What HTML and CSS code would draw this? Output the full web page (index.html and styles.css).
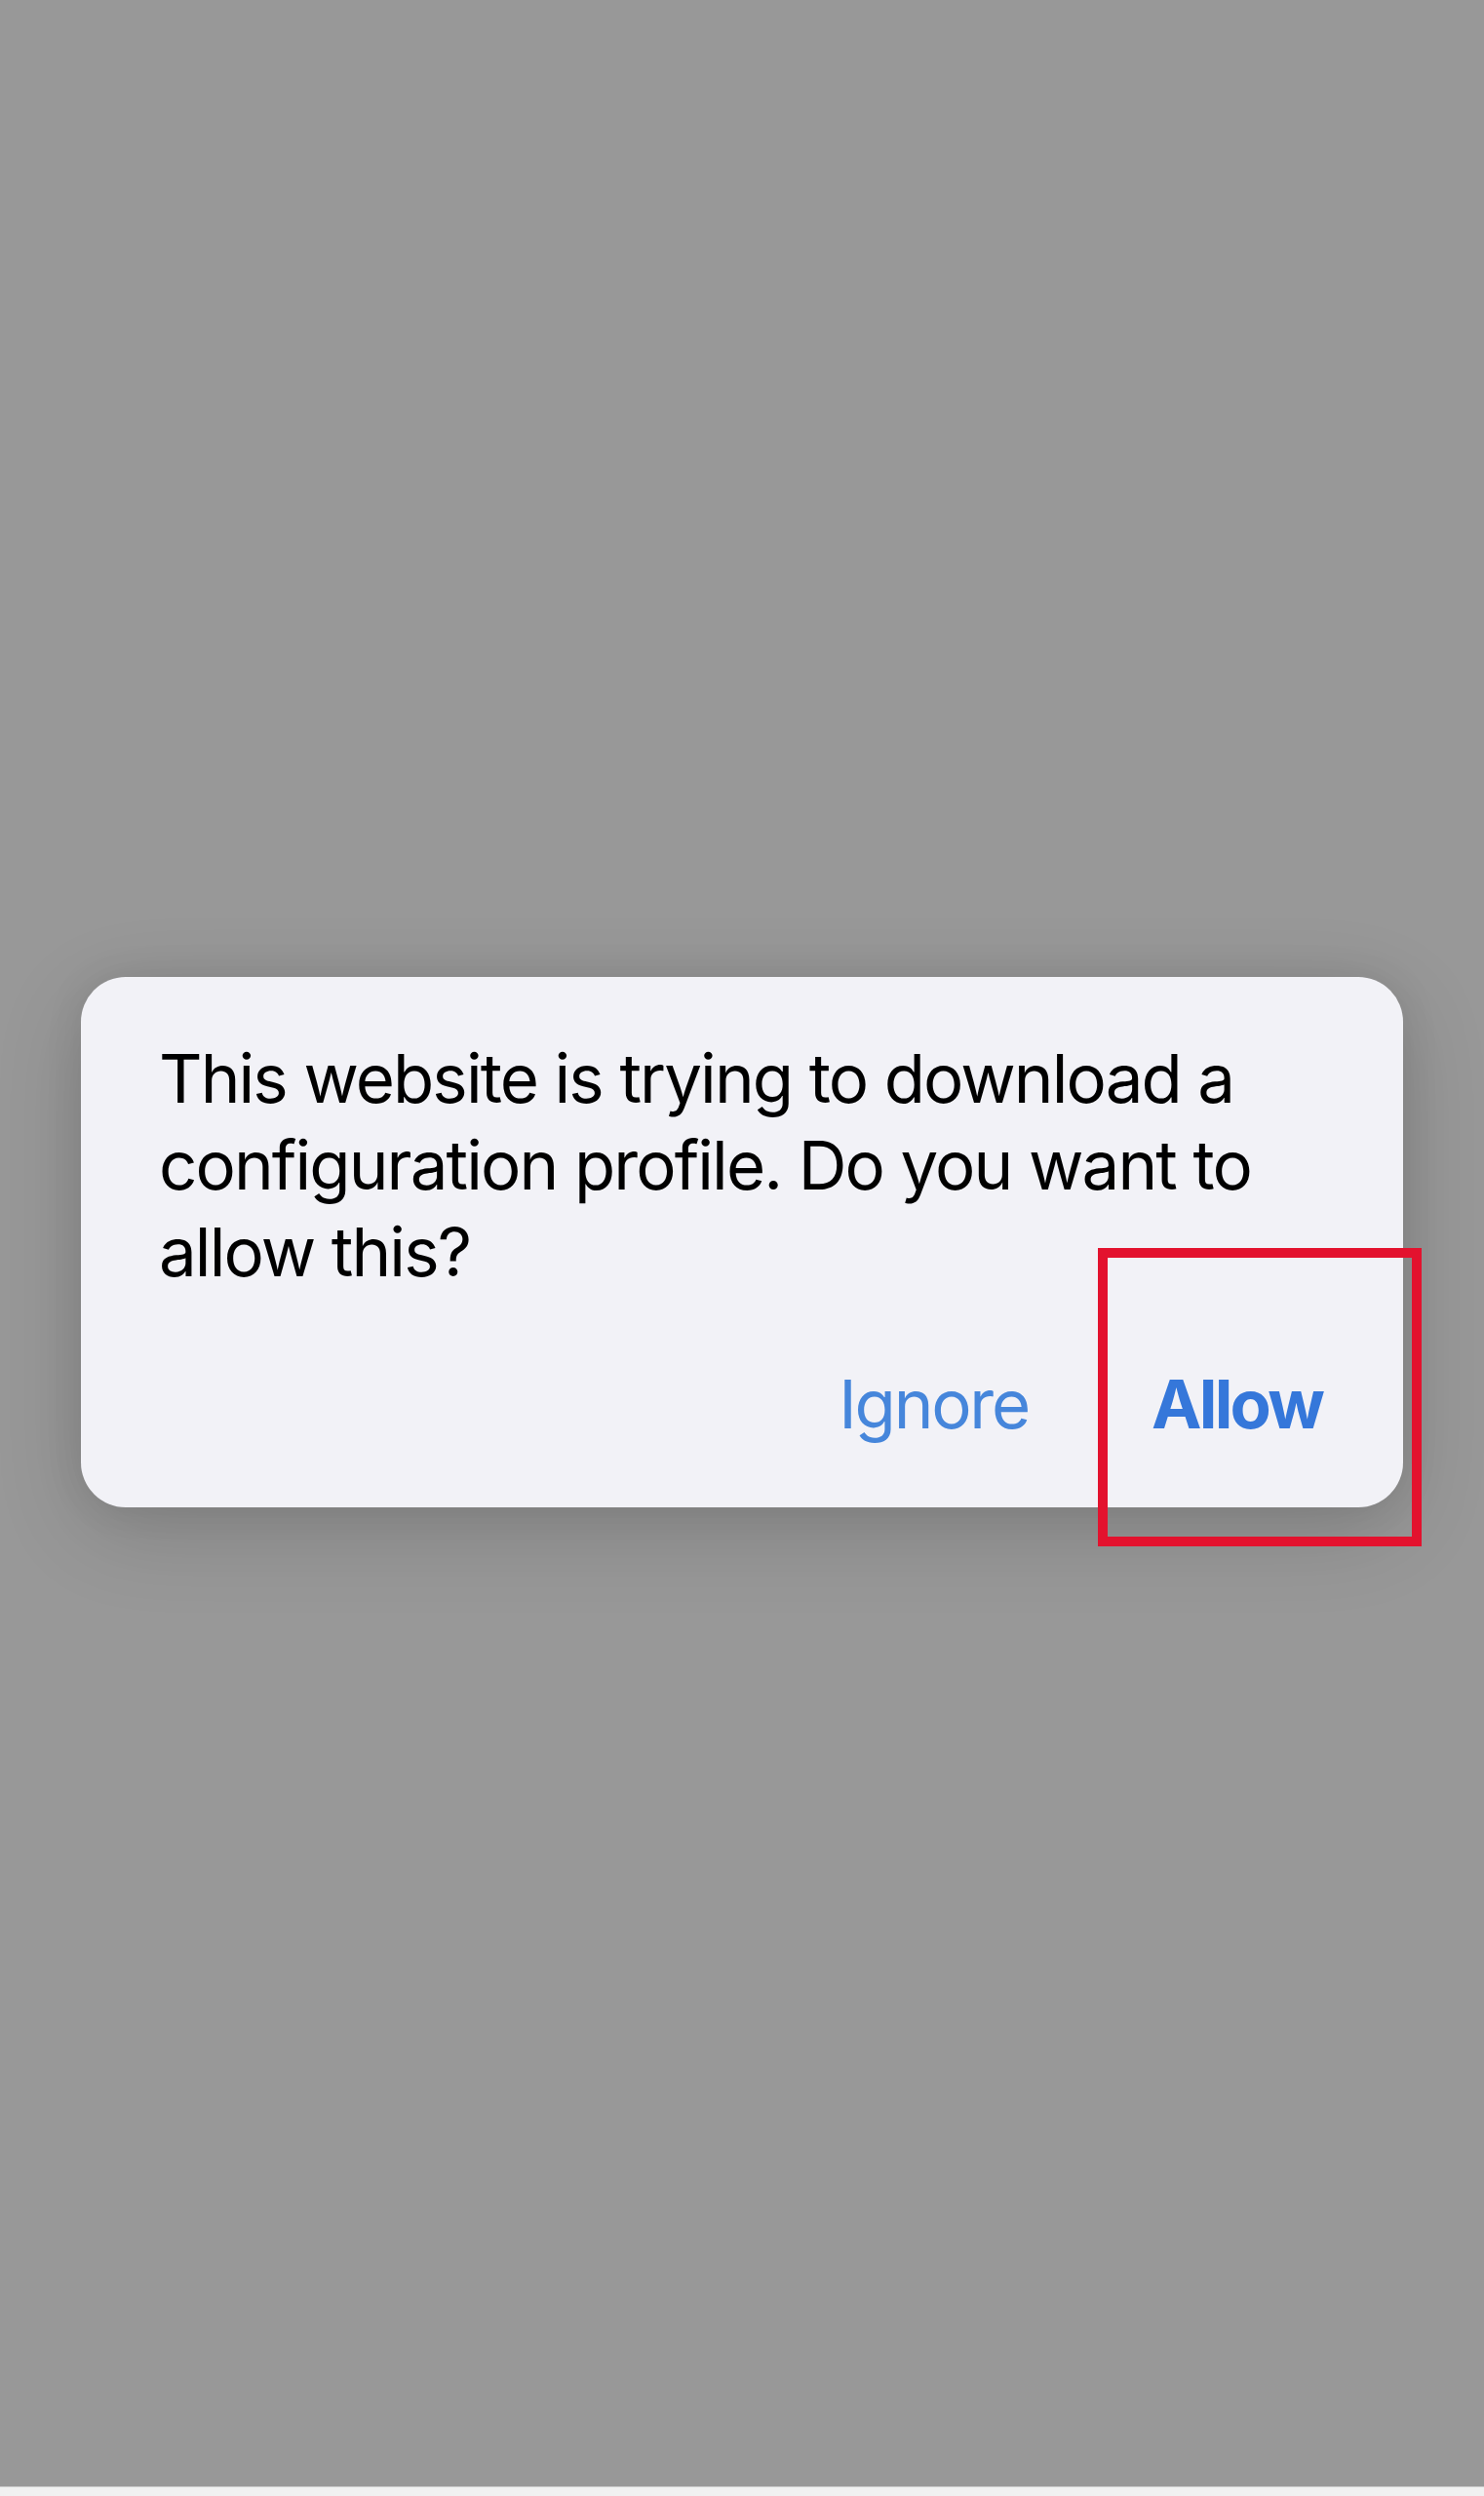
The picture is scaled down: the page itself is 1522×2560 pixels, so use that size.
FILE: index.html
```html
<!DOCTYPE html>
<html lang="en">
<head>
<meta charset="utf-8">
<title>Configuration profile</title>
<link rel="stylesheet" href="styles.css">
</head>
<body>
<main class="screen">
  <div class="alert">
    <p class="alert-message">This website is trying to download a<br>configuration profile. Do you want to<br>allow this?</p>
    <div class="alert-actions">
      <span class="btn btn-ignore">Ignore</span>
      <span class="btn btn-allow">Allow</span>
    </div>
    <div class="highlight"></div>
  </div>
</main>
<div class="bottom-strip"></div>
</body>
</html>
```
FILE: styles.css
```css
html, body {
  margin: 0;
  padding: 0;
}
body {
  width: 1522px;
  height: 2560px;
  background: #989898;
  font-family: Inter, "Noto Sans", "Liberation Sans", sans-serif;
  overflow: hidden;
}
.screen {
  height: 2550px;
  box-sizing: border-box;
  padding: 1002px 0 0 83px;
  background: #989898;
}
.alert {
  position: relative;
  width: 1356px;
  height: 544px;
  box-sizing: border-box;
  padding: 60px 83px 0 80px;
  background: #f2f2f7;
  border-radius: 46px;
  box-shadow: 0 24px 90px rgba(0, 0, 0, 0.16), 0 0 40px rgba(0, 0, 0, 0.08);
}
.alert-message {
  margin: 0;
  font-size: 69px;
  line-height: 89px;
  color: #000;
  letter-spacing: -1.9px;
  font-weight: 400;
}
.alert-actions {
  display: flex;
  justify-content: flex-end;
  gap: 126px;
  margin-top: 67px;
}
.btn {
  font-size: 69px;
  line-height: 89px;
}
.btn-ignore {
  color: #4686db;
  font-weight: 400;
  letter-spacing: -2.2px;
}
.btn-allow {
  color: #3577da;
  font-weight: 700;
  letter-spacing: -2.8px;
}
.highlight {
  position: absolute;
  left: 1043px;
  top: 278px;
  width: 332px;
  height: 306px;
  box-sizing: border-box;
  border: 10px solid #e3122e;
}
.bottom-strip {
  height: 10px;
  background: #f1f1f1;
  border-top: 1px solid #c8c8c8;
  box-sizing: border-box;
}
```
